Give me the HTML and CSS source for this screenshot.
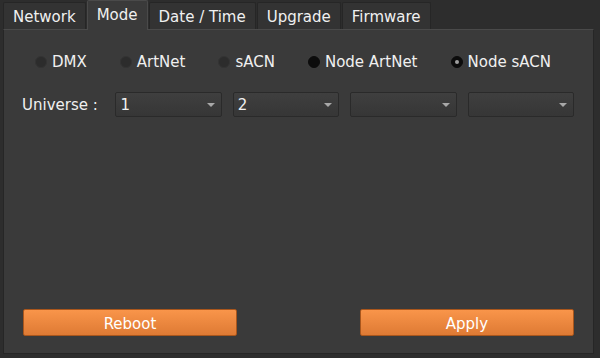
FILE: index.html
```html
<!DOCTYPE html>
<html lang="en">
<head>
    <meta charset="UTF-8">
    <title>Mode</title>
    <link rel="stylesheet" href="styles.css">
</head>
<body>
    <div class="tabs">
        <div class="tab">Network</div>
        <div class="tab active">Mode</div>
        <div class="tab">Date / Time</div>
        <div class="tab">Upgrade</div>
        <div class="tab">Firmware</div>
    </div>
    <div class="panel">
        <div class="modes">
            <label class="option"><span class="radio"></span>DMX</label>
            <label class="option"><span class="radio"></span>ArtNet</label>
            <label class="option"><span class="radio"></span>sACN</label>
            <label class="option"><span class="radio pressed"></span>Node ArtNet</label>
            <label class="option"><span class="radio checked"></span>Node sACN</label>
        </div>
        <div class="universe">
            <div class="label">Universe :</div>
            <div class="combo"><span>1</span><span class="arrow"></span></div>
            <div class="combo"><span>2</span><span class="arrow"></span></div>
            <div class="combo"><span></span><span class="arrow"></span></div>
            <div class="combo"><span></span><span class="arrow"></span></div>
        </div>
        <div class="actions">
            <button class="btn">Reboot</button>
            <button class="btn">Apply</button>
        </div>
    </div>
</body>
</html>
```

FILE: styles.css
```css
html, body {
    height: 100%;
}
body {
    margin: 0;
    padding: 0 6px 4px 3px;
    box-sizing: border-box;
    display: flex;
    flex-direction: column;
    background-color: #2d2d2d;
    color: #f0f0f0;
    font-family: "DejaVu Sans", sans-serif;
    font-size: 15px;
}
.tabs {
    display: flex;
    align-items: flex-end;
    gap: 1px;
    height: 29px;
}
.tab {
    height: 27px;
    box-sizing: border-box;
    padding: 5px 9px 0;
    border: 1px solid #262626;
    border-bottom: none;
    border-radius: 2px 2px 0 0;
    background-color: #333333;
    white-space: nowrap;
}
.tab.active {
    height: 30px;
    margin-bottom: -1px;
    padding-top: 5px;
    background-color: #3a3a3a;
    border-color: #4a4a4a;
    position: relative;
    z-index: 1;
}
.panel {
    flex: 1;
    display: flex;
    flex-direction: column;
    border: 1px solid #262626;
    border-top-color: #4a4a4a;
    background-color: #3a3a3a;
    padding: 22px 19px 17px 19px;
}
.modes {
    display: flex;
    gap: 33px;
    height: 20px;
    padding-left: 12px;
}
.option {
    display: flex;
    align-items: center;
    gap: 5px;
    line-height: 20px;
}
.radio {
    width: 12px;
    height: 12px;
    border-radius: 50%;
    box-sizing: border-box;
    background-color: #2c2c2c;
    border: 1px solid #333333;
    display: flex;
    align-items: center;
    justify-content: center;
}
.radio.pressed {
    background-color: #0c0c0c;
    border-color: #0c0c0c;
}
.radio.checked {
    background-color: #0c0c0c;
    border-color: #0c0c0c;
}
.radio.checked::after {
    content: "";
    width: 4px;
    height: 4px;
    border-radius: 50%;
    background-color: #a0a0a0;
}
.universe {
    display: flex;
    align-items: center;
    gap: 11px;
    margin-top: 20px;
}
.label {
    width: 83px;
    margin-left: -1px;
    padding-top: 1px;
}
.combo {
    width: 107px;
    height: 25px;
    box-sizing: border-box;
    display: flex;
    align-items: center;
    justify-content: space-between;
    padding: 1px 6px 0 4px;
    border: 1px solid #2a2a2a;
    border-radius: 2px;
    background: linear-gradient(#3f3f3f, #363636);
}
.arrow {
    width: 0;
    height: 0;
    border-left: 4px solid transparent;
    border-right: 4px solid transparent;
    border-top: 4px solid #a8a8a8;
}
.actions {
    margin-top: auto;
    display: flex;
    justify-content: space-between;
}
.btn {
    width: 214px;
    height: 27px;
    border: 1px solid #a9561c;
    border-radius: 2px;
    background: linear-gradient(#f9954a, #de7a34);
    color: #ffffff;
    font-family: "DejaVu Sans", sans-serif;
    font-size: 15px;
    padding: 2px 0 0;
}
```
